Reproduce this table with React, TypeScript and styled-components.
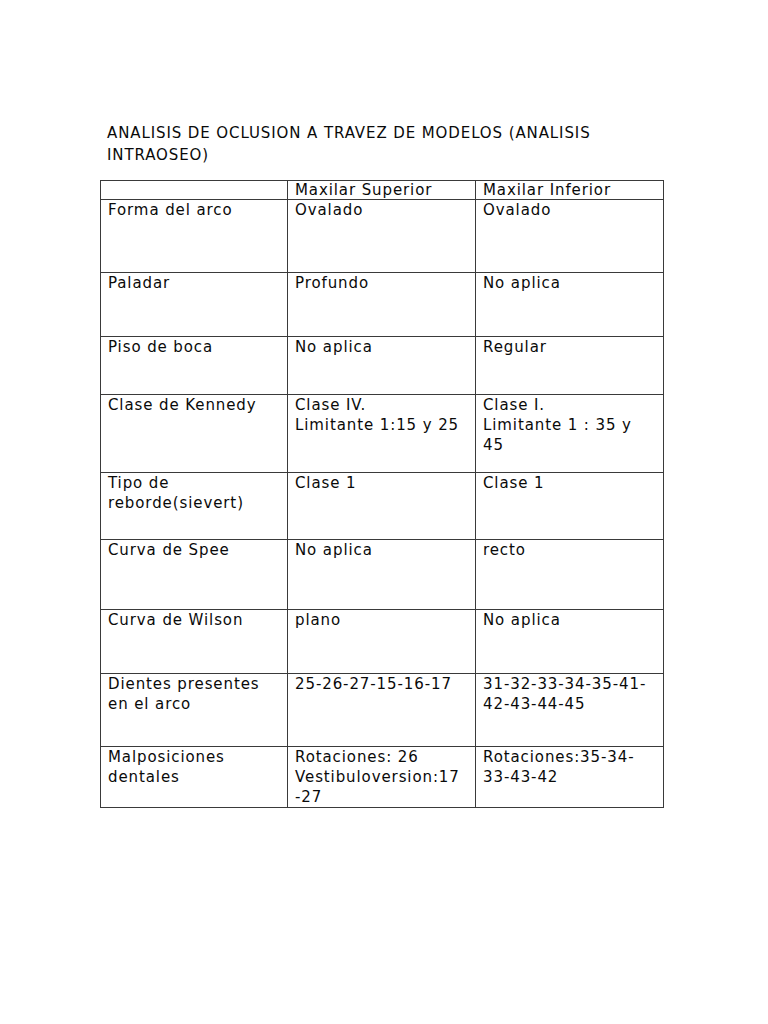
import styled, { createGlobalStyle } from "styled-components";

const rows: { label: string; sup: string; inf: string; height: number }[] = [
  { label: "Forma del arco", sup: "Ovalado", inf: "Ovalado", height: 73 },
  { label: "Paladar", sup: "Profundo", inf: "No aplica", height: 64 },
  { label: "Piso de boca", sup: "No aplica", inf: "Regular", height: 58 },
  {
    label: "Clase de Kennedy",
    sup: "Clase IV.\nLimitante 1:15 y 25",
    inf: "Clase I.\nLimitante 1 : 35 y 45",
    height: 78,
  },
  { label: "Tipo de reborde(sievert)", sup: "Clase 1", inf: "Clase 1", height: 67 },
  { label: "Curva de Spee", sup: "No aplica", inf: "recto", height: 70 },
  { label: "Curva de Wilson", sup: "plano", inf: "No aplica", height: 64 },
  {
    label: "Dientes presentes en el arco",
    sup: "25-26-27-15-16-17",
    inf: "31-32-33-34-35-41-42-43-44-45",
    height: 73,
  },
  {
    label: "Malposiciones dentales",
    sup: "Rotaciones: 26\nVestibuloversion:17\n-27",
    inf: "Rotaciones:35-34-33-43-42",
    height: 61,
  },
];

const App = () => {
  return (
    <>
      <GlobalStyle />
      <Page>
        <Title>ANALISIS DE OCLUSION A TRAVEZ DE MODELOS (ANALISIS INTRAOSEO)</Title>
        <Table>
          <colgroup>
            <col style={{ width: 187 }} />
            <col style={{ width: 188 }} />
            <col style={{ width: 188 }} />
          </colgroup>
          <tbody>
            <Row $height={19}>
              <Cell $header />
              <Cell $header>Maxilar Superior</Cell>
              <Cell $header>Maxilar Inferior</Cell>
            </Row>
            {rows.map((r) => (
              <Row key={r.label} $height={r.height}>
                <Cell>{r.label}</Cell>
                <Cell>{r.sup}</Cell>
                <Cell>{r.inf}</Cell>
              </Row>
            ))}
          </tbody>
        </Table>
      </Page>
    </>
  );
};

const GlobalStyle = createGlobalStyle`
  html, body {
    margin: 0;
    background: #ffffff;
  }
  body {
    font-family: "DejaVu Sans", "Liberation Sans", sans-serif;
    color: #0a0a0a;
  }
`;

const Page = styled.div`
  width: 768px;
  min-height: 1024px;
  padding: 122px 0 0 100px;
  box-sizing: border-box;
`;

const Title = styled.div`
  width: 556px;
  margin-left: 7px;
  font-size: 15px;
  line-height: 22px;
  letter-spacing: 0.9px;
`;

const Table = styled.table`
  margin-top: 14px;
  width: 564px;
  border-collapse: collapse;
  table-layout: fixed;
  font-size: 15px;
  letter-spacing: 0.9px;
`;

const Row = styled.tr<{ $height: number }>`
  height: ${({ $height }) => $height}px;
`;

const Cell = styled.td<{ $header?: boolean }>`
  border: 1px solid #3a3a3a;
  padding: 0 9px 0 7px;
  vertical-align: top;
  line-height: ${({ $header }) => ($header ? "18px" : "20px")};
  white-space: pre-line;
`;

export default App;
